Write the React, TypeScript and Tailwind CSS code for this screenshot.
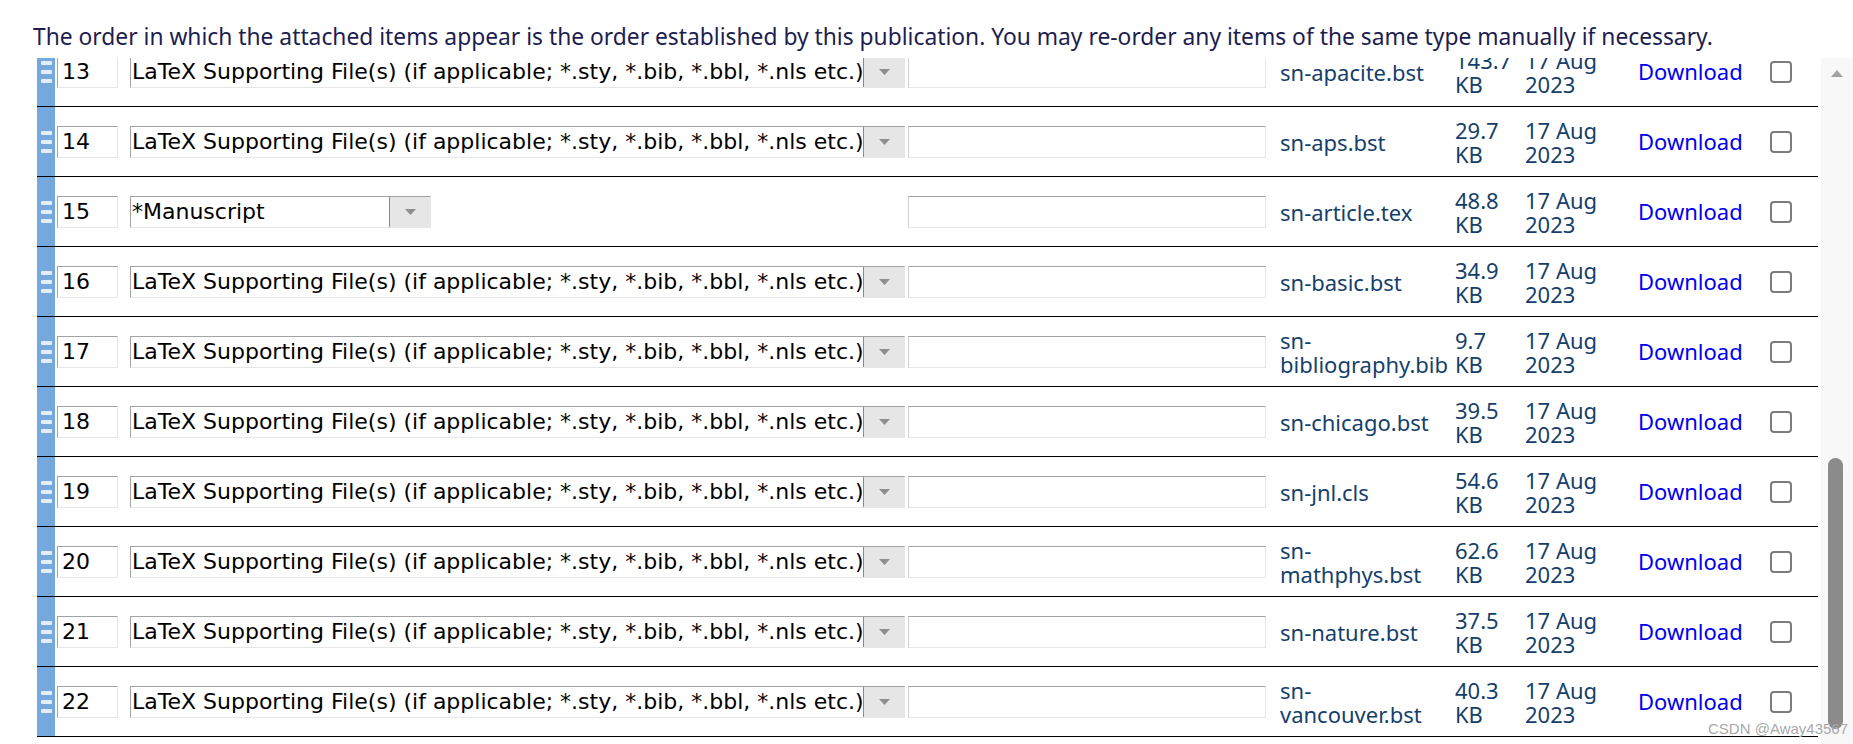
const HEADER =
  'The order in which the attached items appear is the order established by this publication. You may re-order any items of the same type manually if necessary.';
const LATEX = 'LaTeX Supporting File(s) (if applicable; *.sty, *.bib, *.bbl, *.nls etc.)';

const rows = [
  { n: 13, type: LATEX, name: ['sn-apacite.bst'], size: '143.7' },
  { n: 14, type: LATEX, name: ['sn-aps.bst'], size: '29.7' },
  { n: 15, type: '*Manuscript', name: ['sn-article.tex'], size: '48.8', short: true },
  { n: 16, type: LATEX, name: ['sn-basic.bst'], size: '34.9' },
  { n: 17, type: LATEX, name: ['sn-', 'bibliography.bib'], size: '9.7' },
  { n: 18, type: LATEX, name: ['sn-chicago.bst'], size: '39.5' },
  { n: 19, type: LATEX, name: ['sn-jnl.cls'], size: '54.6' },
  { n: 20, type: LATEX, name: ['sn-', 'mathphys.bst'], size: '62.6' },
  { n: 21, type: LATEX, name: ['sn-nature.bst'], size: '37.5' },
  { n: 22, type: LATEX, name: ['sn-', 'vancouver.bst'], size: '40.3' },
];

function Row({ r }: { r: (typeof rows)[number] }) {
  return (
    <div className="flex h-[70px] w-[1781px] items-center border-b border-black">
      {/* drag handle */}
      <div className="flex h-full w-[18px] flex-col items-center justify-center gap-[5px] bg-[#75a8dc]">
        <div className="h-[4px] w-[11px] rounded-[1px] bg-[#e4edf8]" />
        <div className="h-[4px] w-[11px] rounded-[1px] bg-[#e4edf8]" />
        <div className="h-[4px] w-[11px] rounded-[1px] bg-[#e4edf8]" />
      </div>
      <div className="ml-[2px] flex h-[32px] w-[61px] items-center border border-t-[#a3a3a3] border-l-[#a3a3a3] border-r-[#e6e6e6] border-b-[#e6e6e6] pl-[4px] font-['DejaVu_Sans',sans-serif]">
        {r.n}
      </div>
      <div className="ml-[12px] w-[778px] font-['DejaVu_Sans',sans-serif]">
        <div
          className={
            r.short
              ? 'flex h-[32px] w-[301px] border border-t-[#a3a3a3] border-l-[#a3a3a3] border-r-[#e6e6e6] border-b-[#e6e6e6]'
              : 'flex h-[32px] w-[775px] border border-t-[#a3a3a3] border-l-[#a3a3a3] border-r-[#e6e6e6] border-b-[#e6e6e6]'
          }
        >
          <span className="flex flex-1 items-center overflow-hidden whitespace-nowrap pl-[1px]">{r.type}</span>
          <span className="flex w-[41px] items-center justify-center border-l border-l-[#8a8a8a] bg-[#e6e6e6]">
            <svg width="11" height="6" viewBox="0 0 11 6">
              <path d="M0 0h11L5.5 6z" fill="#8e8e8e" />
            </svg>
          </span>
        </div>
      </div>
      <div className="h-[32px] w-[358px] border border-t-[#a3a3a3] border-l-[#d0d0d0] border-r-[#e6e6e6] border-b-[#e6e6e6]" />
      <div className="ml-[14px] w-[175px] leading-[24px] text-[#153f6b]">
        {r.name.map((p) => (
          <div key={p}>{p}</div>
        ))}
      </div>
      <div className="w-[70px] leading-[24px] text-[#153f6b]">
        {r.size}
        <br />
        KB
      </div>
      <div className="w-[113px] leading-[24px] text-[#153f6b]">
        17 Aug
        <br />
        2023
      </div>
      <div className="w-[132px] text-[#0000ee]">Download</div>
      <div className="h-[22px] w-[22px] rounded-[4px] border-2 border-[#7c7c7c] bg-white" />
    </div>
  );
}

export default function App() {
  return (
    <div className="relative h-[744px] w-[1853px] overflow-hidden bg-white font-['Noto_Sans',sans-serif] text-[22px] text-black">
      <div className="h-[58px] whitespace-nowrap pl-[33px] pt-[22px] text-[22.8px] leading-[30px] text-[#1d1d50]">{HEADER}</div>
      <div className="flex h-[686px]">
        <div className="w-[1821px] overflow-hidden">
          <div className="mt-[-21px] pl-[37px]">
            {rows.map((r) => (
              <Row key={r.n} r={r} />
            ))}
          </div>
        </div>
        {/* scrollbar */}
        <div className="flex w-[32px] flex-col bg-[#f8f8f8]">
          <div className="flex h-[30px] items-center justify-center">
            <svg width="12" height="7" viewBox="0 0 12 7">
              <path d="M0 7h12L6 0z" fill="#a3a3a3" />
            </svg>
          </div>
          <div className="flex-1" />
          <div className="ml-[7px] h-[271px] w-[15px] rounded-full bg-[#8b8b8b]" />
          <div className="h-[15px]" />
        </div>
      </div>
      <div className="absolute left-[1708px] top-[718px] whitespace-nowrap font-['Liberation_Sans',sans-serif] text-[15px] text-[#a9a9a9]">
        CSDN @Away43567
      </div>
    </div>
  );
}
